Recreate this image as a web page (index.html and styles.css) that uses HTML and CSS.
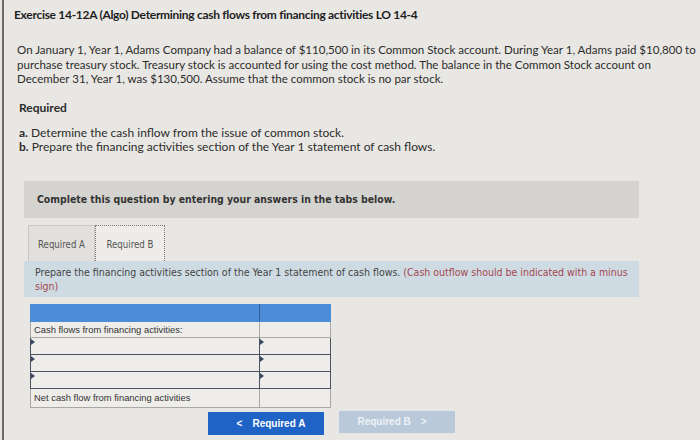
FILE: index.html
```html
<!DOCTYPE html>
<html>
<head>
<meta charset="utf-8">
<link rel="stylesheet" href="styles.css">
</head>
<body>
<div class="page">
  <h1 class="title">Exercise 14-12A (Algo) Determining cash flows from financing activities LO 14-4</h1>
  <p class="intro">On January 1, Year 1, Adams Company had a balance of $110,500 in its Common Stock account. During Year 1, Adams paid $10,800 to purchase treasury stock. Treasury stock is accounted for using the cost method. The balance in the Common Stock account on December 31, Year 1, was $130,500. Assume that the common stock is no par stock.</p>
  <h2 class="req-head">Required</h2>
  <div class="req-list">
    <div><b>a.</b> Determine the cash inflow from the issue of common stock.</div>
    <div><b>b.</b> Prepare the financing activities section of the Year 1 statement of cash flows.</div>
  </div>

  <div class="question">
    <div class="banner">Complete this question by entering your answers in the tabs below.</div>
    <div class="tabs">
      <div class="tab">Required A</div>
      <div class="tab active">Required B</div>
    </div>
    <div class="instr">Prepare the financing activities section of the Year 1 statement of cash flows. <span class="red">(Cash outflow should be indicated with a minus</span> <span class="red">sign)</span></div>

    <table class="cf">
      <tr class="hdr"><td class="c1"></td><td class="c2"></td></tr>
      <tr class="lbl"><td class="c1">Cash flows from financing activities:</td><td class="c2"></td></tr>
      <tr class="inp"><td class="c1"><span class="mark"></span></td><td class="c2"><span class="mark"></span></td></tr>
      <tr class="inp"><td class="c1"><span class="mark"></span></td><td class="c2"><span class="mark"></span></td></tr>
      <tr class="inp"><td class="c1"><span class="mark"></span></td><td class="c2"><span class="mark"></span></td></tr>
      <tr class="lbl net"><td class="c1">Net cash flow from financing activities</td><td class="c2"></td></tr>
    </table>

    <div class="nav">
      <div class="btn prev"><span class="chev">&lt;</span>Required A</div>
      <div class="btn next">Required B<span class="chev">&gt;</span></div>
    </div>
  </div>
</div>
</body>
</html>
```
FILE: styles.css
```css
html, body {
  margin: 0;
  padding: 0;
  background: #e9e7e3;
}
.page {
  margin-left: 2px;
  border-left: 2px solid #6d6c6a;
  height: 440px;
  box-sizing: border-box;
  padding: 6px 0 0 10px;
  font-family: Lato, "Liberation Sans", sans-serif;
  color: #2c2c2c;
}
.title {
  margin: 0;
  font-size: 12px;
  letter-spacing: -0.3px;
  font-weight: bold;
  line-height: 18px;
  color: #1e1e1e;
}
.intro {
  margin: 19px 0 0 3px;
  font-size: 11.55px;
  line-height: 14.5px;
  width: 686px;
}
.req-head {
  margin: 14px 0 0 5px;
  font-size: 12px;
  font-weight: bold;
  line-height: 14px;
}
.req-list {
  margin: 11px 0 0 5px;
  font-size: 12px;
  line-height: 14.5px;
}
.question {
  margin: 26px 0 0 10px;
  width: 615px;
  font-family: "DejaVu Sans Condensed", "DejaVu Sans", sans-serif;
}
.banner {
  background: #d5d3cf;
  height: 37px;
  line-height: 37px;
  padding-left: 13px;
  font-size: 10.4px;
  font-weight: bold;
  color: #333;
}
.tabs {
  display: flex;
  margin: 7px 0 0 4px;
  height: 36px;
}
.tab {
  width: 67px;
  box-sizing: border-box;
  border: 1px solid #c9c7c3;
  border-bottom: none;
  background: #e2e0dc;
  font-size: 9.6px;
  color: #555;
  display: flex;
  align-items: center;
  justify-content: center;
  padding-top: 3px;
}
.tab.active {
  width: 70px;
  background: #edece9;
  border: 1px dotted #777;
  border-bottom: none;
}
.instr {
  background: #cfdbe3;
  height: 36px;
  box-sizing: border-box;
  padding: 4px 5px 0 11px;
  font-size: 10.5px;
  line-height: 14px;
  color: #444;
}
.red { color: #a5474f; }
.cf {
  margin: 7px 0 0 6px;
  border-collapse: collapse;
  font-family: "Liberation Sans", Arial, sans-serif;
  font-size: 9.4px;
  color: #333;
}
.cf td {
  padding: 0 0 0 3px;
  border: 1px solid #a9a8a6;
  background: #eeedea;
  position: relative;
}
.cf .c1 { width: 225px; }
.cf .c2 { width: 67px; }
.cf .hdr td {
  height: 16px;
  background: #4b8dd8;
  border-color: #4b8dd8;
  border-right-color: #3a5f8a;
}
.cf .hdr td.c2 { border-right-color: #4b8dd8; }
.cf .lbl td { height: 15px; }
.cf .net td { height: 18px; }
.cf .inp td {
  height: 16px;
  border: 1px solid #4c5260;
}
.mark {
  position: absolute;
  left: 0;
  top: 1px;
  width: 0;
  height: 0;
  border-top: 3px solid transparent;
  border-bottom: 3px solid transparent;
  border-left: 4px solid #3d4a66;
}
.nav {
  display: flex;
  margin: 4px 0 0 184px;
  gap: 15px;
}
.btn {
  width: 116px;
  height: 23px;
  display: flex;
  align-items: center;
  justify-content: center;
  font-family: "Liberation Sans", Arial, sans-serif;
  font-size: 10px;
  font-weight: bold;
  color: #fff;
}
.btn.prev { background: #1f63c6; }
.btn.next {
  background: #b9c9d9;
  color: #edf1f5;
  height: 22px;
  margin-top: -1px;
}
.chev { margin: 0 10px; }
```
